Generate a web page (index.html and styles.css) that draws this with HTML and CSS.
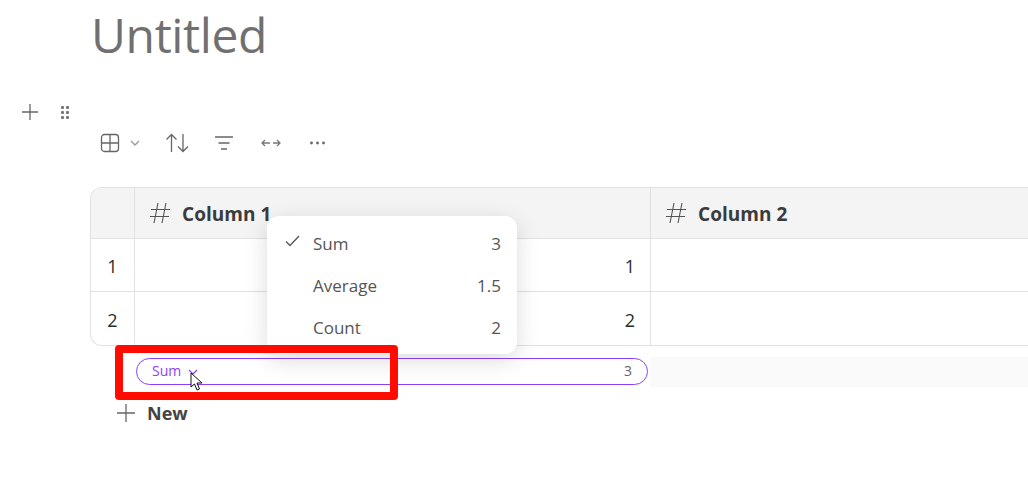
FILE: index.html
```html
<!DOCTYPE html>
<html lang="en">
<head>
<meta charset="utf-8">
<title>Untitled</title>
<link rel="stylesheet" href="styles.css">
</head>
<body>
<main class="page">
  <h1 class="title">Untitled</h1>
  <div class="handles">
    <svg class="ic-plus" width="16" height="16" viewBox="0 0 16 16"><path d="M8 0v16M0 8h16"/></svg>
    <svg class="ic-grip" width="8" height="13" viewBox="0 0 8 13"><g><rect x="0" y="0" width="3" height="3" rx="1"/><rect x="5" y="0" width="3" height="3" rx="1"/><rect x="0" y="5" width="3" height="3" rx="1"/><rect x="5" y="5" width="3" height="3" rx="1"/><rect x="0" y="10" width="3" height="3" rx="1"/><rect x="5" y="10" width="3" height="3" rx="1"/></g></svg>
  </div>
  <div class="toolbar">
    <svg class="ic" width="20" height="20" viewBox="0 0 20 20"><rect x="1.500" y="1.500" width="17" height="17" rx="3"/><path d="M10 1.500v17M1.500 10h17"/></svg>
    <svg class="ic chev" width="10" height="6" viewBox="0 0 10 6"><path d="M1 1l4 4 4-4"/></svg>
    <svg class="ic sort" width="24" height="20" viewBox="0 0 24 20"><path d="M6.500 19V1.500M1.500 6.500l5-5 5 5M18 1v17.500M13 13.500l5 5 5-5"/></svg>
    <svg class="ic filter" width="18" height="14" viewBox="0 0 18 14"><path d="M0 1h18M3.500 7h11M6 13h6"/></svg>
    <svg class="ic width" width="20" height="10" viewBox="0 0 20 10"><path d="M9 5H1M4 2L1 5l3 3M12 5h7M16 2l3 3-3 3"/></svg>
    <svg class="more" width="15" height="4" viewBox="0 0 15 4"><circle cx="1.500" cy="2" r="1.400"/><circle cx="7.500" cy="2" r="1.400"/><circle cx="13.500" cy="2" r="1.400"/></svg>
  </div>
  <div class="table">
    <div class="row head">
      <div class="cell idx"></div>
      <div class="cell col1"><svg class="hash" width="20" height="20" viewBox="0 0 20 20"><path d="M8 0L4 20M16 0L12 20M1 6.500h19M0 13.500h19"/></svg><span class="name">Column 1</span></div>
      <div class="cell col2"><svg class="hash" width="20" height="20" viewBox="0 0 20 20"><path d="M8 0L4 20M16 0L12 20M1 6.500h19M0 13.500h19"/></svg><span class="name">Column 2</span></div>
    </div>
    <div class="row">
      <div class="cell idx">1</div>
      <div class="cell col1 num">1</div>
      <div class="cell col2"></div>
    </div>
    <div class="row last">
      <div class="cell idx">2</div>
      <div class="cell col1 num">2</div>
      <div class="cell col2"></div>
    </div>
  </div>
  <div class="summary">
    <div class="pill"><span class="pill-label">Sum</span><svg class="pill-chev" width="10" height="6" viewBox="0 0 10 6"><path d="M1 1l4 4 4-4"/></svg><span class="pill-value">3</span></div>
    <div class="summary-rest"></div>
  </div>
  <div class="new">
    <svg class="ic-new" width="18" height="18" viewBox="0 0 18 18"><path d="M9 0v18M0 9h18"/></svg>
    <span>New</span>
  </div>
</main>
<div class="menu">
  <div class="menu-item"><svg class="check" width="15" height="12" viewBox="0 0 15 12"><path d="M1 6.500L5 10.500 14 1"/></svg><span class="menu-label">Sum</span><span class="menu-val">3</span></div>
  <div class="menu-item"><span class="menu-label">Average</span><span class="menu-val">1.5</span></div>
  <div class="menu-item"><span class="menu-label">Count</span><span class="menu-val">2</span></div>
</div>
<div class="highlight"></div>
<svg class="cursor" width="14" height="20" viewBox="0 0 14 20"><path d="M1 1v14l3.500-3 2.500 6 2.500-1-2.500-6H12z"/></svg>
</body>
</html>
```
FILE: styles.css
```css
* { box-sizing: border-box; }
html, body { margin: 0; height: 100%; overflow: hidden; background: #fff; }
body { font-family: "Open Sans", "Noto Sans", sans-serif; color: #333; position: relative; }
.page { display: flex; flex-direction: column; width: 1028px; }
.title { margin: 0 0 0 91px; height: 100px; font-size: 48px; line-height: 70px; font-weight: 400; color: #707070; letter-spacing: -0.4px; }
svg path { fill: none; }
.handles { display: flex; align-items: center; height: 24px; padding-left: 22px; }
.ic-plus path { stroke: #666; stroke-width: 1.300; }
.ic-grip { margin-left: 23px; }
.ic-grip rect { fill: #777; }
.toolbar { display: flex; align-items: center; height: 38px; padding-left: 100px; }
.ic * { stroke: #666; stroke-width: 1.300; fill: none; }
.chev { margin-left: 10px; }
.chev path { stroke: #999; }
.sort { margin-left: 25px; }
.filter { margin-left: 26px; }
.width { margin-left: 28px; }
.width path { stroke: #777; }
.more { margin-left: 29px; }
.more circle { fill: #666; }
.table { margin: 25px 0 0 90px; width: 938px; border: 1px solid #e1e1e1; border-right: 0; border-radius: 12px 0 0 12px; overflow: hidden; }
.row { display: flex; height: 53px; border-bottom: 1px solid #e1e1e1; }
.row.last { border-bottom: 0; }
.head { height: 51px; background: #f4f4f4; }
.cell { display: flex; align-items: center; border-right: 1px solid #e1e1e1; font-size: 18px; color: #2b2b2b; padding-top: 2px; }
.head .cell { padding-top: 0; }
.idx { width: 44px; flex: none; justify-content: center; }
.col1 { width: 516px; flex: none; padding-left: 15px; }
.col2 { flex: 1; padding-left: 15px; border-right: 0; }
.num { justify-content: flex-end; padding-right: 15px; }
.hash { flex: none; margin-right: 12px; }
.hash path { stroke: #555; stroke-width: 1.100; }
.name { font-size: 19px; font-weight: 700; letter-spacing: 0.05px; color: #3b3b3b; padding-top: 2px; }
.summary { display: flex; margin: 11px 0 0 90px; height: 30px; }
.pill { margin: 1px 0 0 46px; width: 512px; height: 27px; border: 1px solid #8a3ffc; border-radius: 14px; display: flex; align-items: center; padding: 0 15px; font-size: 14px; }
.pill-label { color: #8a3ffc; margin-top: -2px; }
.pill-chev { margin-left: 7px; }
.pill-chev path { stroke: #8a3ffc; stroke-width: 1.200; }
.pill-value { margin-left: auto; color: #666; font-size: 14px; margin-top: -2px; }
.summary-rest { flex: 1; background: #fafafa; margin-left: 2px; }
.new { display: flex; align-items: center; margin: 14px 0 0 117px; font-size: 18px; font-weight: 700; color: #444; }
.new span { margin-left: 12px; }
.ic-new path { stroke: #666; stroke-width: 1.300; }
.menu { position: absolute; left: 267px; top: 216px; width: 250px; height: 138px; padding: 6px 0; background: #fff; border-radius: 12px; box-shadow: 0 6px 24px rgba(0,0,0,.14); display: flex; flex-direction: column; }
.menu-item { position: relative; flex: 1; display: flex; align-items: center; padding: 0 16px 0 46px; font-size: 17px; color: #555; }
.menu-val { margin-left: auto; }
.check { position: absolute; left: 18px; top: 13px; }
.check path { stroke: #555; stroke-width: 1.300; }
.highlight { position: absolute; left: 115px; top: 345px; width: 283px; height: 55px; border: 8px solid #ff0c00; border-radius: 4px; }
.cursor { position: absolute; left: 190px; top: 372px; }
.cursor path { fill: #fff; stroke: #111; stroke-width: 1; }
```
